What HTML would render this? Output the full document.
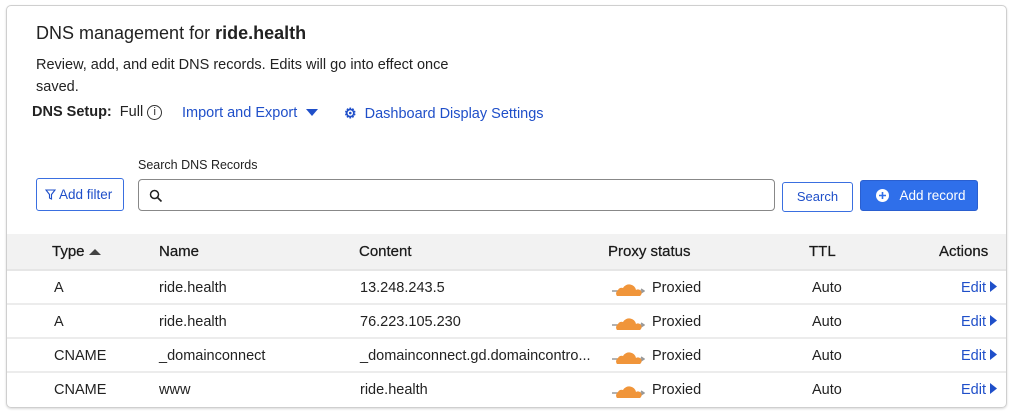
<!DOCTYPE html>
<html><head><meta charset="utf-8"><style>
*{box-sizing:border-box;margin:0;padding:0}
body{width:1024px;height:414px;background:#fff;font-family:"Liberation Sans",Arial,sans-serif;color:#222;position:relative;overflow:hidden}
.card{position:absolute;left:6px;top:5px;width:1001px;height:403px;border:1px solid #cfcfcf;border-radius:5px;box-shadow:0 1px 2px rgba(0,0,0,.15);overflow:hidden}
.a{position:absolute;white-space:nowrap}
.blue{color:#1f4fc9}
.hdr{position:absolute;left:0;top:228px;width:1001px;height:37px;background:#f2f2f2;border-bottom:2px solid #e6e6e6}
.row{position:absolute;left:0;width:1001px;height:34px;border-bottom:2px solid #ececec;font-size:14.5px}
.row span{position:absolute;top:9px;white-space:nowrap}
.th span{position:absolute;top:9px;font-size:15px;color:#1a1a1a;-webkit-text-stroke:0.25px #1a1a1a}
</style></head><body>
<div class="card">
<div class="a" style="left:29px;top:17px;font-size:18px;color:#222">DNS management for <b>ride.health</b></div>
<div class="a" style="left:29px;top:48px;font-size:14.5px;line-height:22px;white-space:normal;width:440px">Review, add, and edit DNS records. Edits will go into effect once saved.</div>
<div class="a" style="left:25px;top:98px;font-size:14.5px"><b>DNS Setup:</b>&nbsp; Full <span style="display:inline-block;width:15px;height:15px;border:1px solid #333;border-radius:50%;font-size:11px;text-align:center;line-height:13px;vertical-align:1px">i</span></div>
<div class="a blue" style="left:175px;top:99px;font-size:14.5px">Import and Export <svg width="14" height="9" style="margin-left:4px"><path d="M1 1h12L7 8z" fill="#1f4fc9"/></svg></div>
<div class="a blue" style="left:337px;top:99px;font-size:14.5px"><span style="font-size:14px;font-weight:bold">&#x2699;</span>&nbsp; Dashboard Display Settings</div>
<div class="a" style="left:131px;top:152px;font-size:12.5px">Search DNS Records</div>
<div class="a blue" style="left:29px;top:172px;width:88px;height:33px;border:1px solid #3a6fe0;border-radius:3px;font-size:13.5px;line-height:31px;padding-left:8px"><svg width="11" height="11" style="vertical-align:-1px"><path d="M1 1h9L6.5 5.5V10L4.5 9V5.5z" fill="none" stroke="#1f4fc9" stroke-width="1.1"/></svg> Add filter</div>
<div class="a" style="left:131px;top:173px;width:637px;height:32px;border:1px solid #888;border-radius:4px"><svg width="14" height="14" style="position:absolute;left:10px;top:9px"><circle cx="5.5" cy="5.5" r="4" fill="none" stroke="#222" stroke-width="1.5"/><path d="M8.5 8.5l4 4" stroke="#222" stroke-width="1.6"/></svg></div>
<div class="a blue" style="left:775px;top:176px;width:71px;height:30px;border:1px solid #3a6fe0;border-radius:3px;font-size:13px;line-height:28px;text-align:center">Search</div>
<div class="a" style="left:853px;top:174px;width:118px;height:31px;background:#2f6fea;border:1px solid #2a5fd0;border-radius:3px;color:#fff;font-size:13.5px;line-height:29px;padding-left:15px"><svg width="13" height="13" style="vertical-align:-2px"><circle cx="6.5" cy="6.5" r="6.5" fill="#fff"/><path d="M6.5 3v7M3 6.5h7" stroke="#2f6fea" stroke-width="1.6"/></svg>&nbsp;&nbsp; Add record</div>
<div class="hdr th">
<span style="left:45px">Type <svg width="12" height="8"><path d="M0 7h12L6 1z" fill="#444"/></svg></span>
<span style="left:152px">Name</span><span style="left:352px">Content</span><span style="left:601px">Proxy status</span><span style="left:802px">TTL</span><span style="left:932px">Actions</span>
</div>
</div>
<div class="card" style="border-color:transparent;box-shadow:none;background:transparent">
<div class="row" style="top:265px"><span style="left:47px">A</span><span style="left:152px">ride.health</span><span style="left:353px">13.248.243.5</span><span style="left:604px;top:8px"><svg width="34" height="18"><path d="M1 12h6M28 12h5M30 10l3 2-3 2" stroke="#999" stroke-width="1.5" fill="none"/><path d="M6 17a4 4 0 0 1 1-6a4 4 0 0 1 5-2a7 7 0 0 1 13 2a3.5 3.5 0 0 1 4 6z" fill="#f0953a"/></svg></span><span style="left:645px">Proxied</span><span style="left:805px">Auto</span><span style="left:954px" class="blue">Edit <svg width="7" height="11"><path d="M0 0l7 5.5L0 11z" fill="#1f4fc9"/></svg></span></div>
<div class="row" style="top:299px"><span style="left:47px">A</span><span style="left:152px">ride.health</span><span style="left:353px">76.223.105.230</span><span style="left:604px;top:8px"><svg width="34" height="18"><path d="M1 12h6M28 12h5M30 10l3 2-3 2" stroke="#999" stroke-width="1.5" fill="none"/><path d="M6 17a4 4 0 0 1 1-6a4 4 0 0 1 5-2a7 7 0 0 1 13 2a3.5 3.5 0 0 1 4 6z" fill="#f0953a"/></svg></span><span style="left:645px">Proxied</span><span style="left:805px">Auto</span><span style="left:954px" class="blue">Edit <svg width="7" height="11"><path d="M0 0l7 5.5L0 11z" fill="#1f4fc9"/></svg></span></div>
<div class="row" style="top:333px"><span style="left:47px">CNAME</span><span style="left:152px">_domainconnect</span><span style="left:353px">_domainconnect.gd.domaincontro...</span><span style="left:604px;top:8px"><svg width="34" height="18"><path d="M1 12h6M28 12h5M30 10l3 2-3 2" stroke="#999" stroke-width="1.5" fill="none"/><path d="M6 17a4 4 0 0 1 1-6a4 4 0 0 1 5-2a7 7 0 0 1 13 2a3.5 3.5 0 0 1 4 6z" fill="#f0953a"/></svg></span><span style="left:645px">Proxied</span><span style="left:805px">Auto</span><span style="left:954px" class="blue">Edit <svg width="7" height="11"><path d="M0 0l7 5.5L0 11z" fill="#1f4fc9"/></svg></span></div>
<div class="row" style="top:367px;border-bottom:none"><span style="left:47px">CNAME</span><span style="left:152px">www</span><span style="left:353px">ride.health</span><span style="left:604px;top:8px"><svg width="34" height="18"><path d="M1 12h6M28 12h5M30 10l3 2-3 2" stroke="#999" stroke-width="1.5" fill="none"/><path d="M6 17a4 4 0 0 1 1-6a4 4 0 0 1 5-2a7 7 0 0 1 13 2a3.5 3.5 0 0 1 4 6z" fill="#f0953a"/></svg></span><span style="left:645px">Proxied</span><span style="left:805px">Auto</span><span style="left:954px" class="blue">Edit <svg width="7" height="11"><path d="M0 0l7 5.5L0 11z" fill="#1f4fc9"/></svg></span></div>
</div>
</body></html>
